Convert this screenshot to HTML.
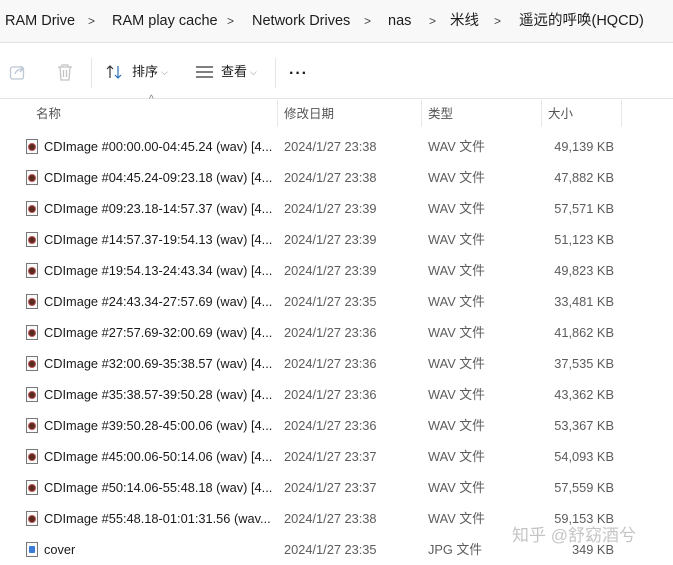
<!DOCTYPE html>
<html><head><meta charset="utf-8"><style>
*{margin:0;padding:0;box-sizing:border-box}
body{width:673px;height:565px;overflow:hidden;background:#fff;font-family:"Liberation Sans","Noto Sans CJK SC",sans-serif;color:#1b1b1b;position:relative}
.crumb{position:absolute;top:0;left:0;width:673px;height:43px;background:#f8f8f8;border-bottom:1px solid #e2e2e2}
.crumb span{position:absolute;top:0;line-height:42px;font-size:14.5px;color:#1c1c1c;white-space:nowrap}
.crumb .c{font-size:12px;color:#444}
.abs{position:absolute;white-space:nowrap}
.hdr{font-size:12.5px;color:#555;top:100px;line-height:28px}
.vl{position:absolute;top:100px;height:27px;width:1px;background:#e6e6e6}
.row{position:absolute;left:0;width:673px;height:31px;font-size:12.8px}
.row span{position:absolute;top:0;line-height:31px;height:31px}
.row .n{left:44px;color:#1a1a1a}
.row .d{left:284px;color:#5c5c5c}
.row .t{left:428px;color:#5c5c5c}
.row .s{right:59px;color:#5c5c5c}
.ic{position:absolute;left:26px;top:8px;width:12px;height:15px;border:1px solid #777;background:#fafafa}
.ic:after{content:"";position:absolute;left:2px;top:4px;width:6px;height:6px;border-radius:50%;background:#5a2a20;box-shadow:0 0 0 1px #b55}
.ic.j:after{border-radius:1px;background:#3a7bd5;box-shadow:none;left:2px;top:3px;width:6px;height:7px}
.tb{position:absolute;top:58px;line-height:28px;font-size:13px;white-space:nowrap}
</style></head><body>
<div class="crumb">
<span style="left:5px">RAM Drive</span><span class="c" style="left:88px">&gt;</span>
<span style="left:112px">RAM play cache</span><span class="c" style="left:227px">&gt;</span>
<span style="left:252px">Network Drives</span><span class="c" style="left:364px">&gt;</span>
<span style="left:388px">nas</span><span class="c" style="left:429px">&gt;</span>
<span style="left:450px">米线</span><span class="c" style="left:494px">&gt;</span>
<span style="left:519px">遥远的呼唤(HQCD)</span>
</div>
<svg class="abs" style="left:9px;top:63px" width="18" height="18" viewBox="0 0 18 18" fill="none" stroke="#bcc8d4" stroke-width="1.3"><rect x="1.5" y="4" width="13" height="12" rx="2"/><path d="M6 11c1-4 4-5 8-5M11 3l3 3-3 3"/></svg>
<svg class="abs" style="left:57px;top:63px" width="16" height="18" viewBox="0 0 16 18" fill="none" stroke="#c4c4c4" stroke-width="1.3"><path d="M1 4h14M5 4V2h6v2M3 4l1 13h8l1-13M6.5 7v7M9.5 7v7"/></svg>
<div class="abs" style="left:91px;top:58px;width:1px;height:30px;background:#e4e4e4"></div>
<svg class="abs" style="left:106px;top:64px" width="18" height="16" viewBox="0 0 18 16" fill="none" stroke="#333" stroke-width="1.2"><path d="M4 14V2M1 5l3-3 3 3"/><path d="M12 2v12M9 11l3 3 3-3" stroke="#2a6fb5"/></svg>
<span class="tb" style="left:132px">排序</span>
<span class="tb" style="left:161px;font-size:9px;color:#888">⌵</span>
<svg class="abs" style="left:196px;top:66px" width="17" height="12" viewBox="0 0 17 12" stroke="#333" stroke-width="1.2"><path d="M0 1h17M0 6h17M0 11h17"/></svg>
<span class="tb" style="left:221px">查看</span>
<span class="tb" style="left:250px;font-size:9px;color:#888">⌵</span>
<div class="abs" style="left:275px;top:58px;width:1px;height:30px;background:#e4e4e4"></div>
<span class="tb" style="left:289px;top:60px;font-size:16px;font-weight:bold;letter-spacing:1px">···</span>
<div class="abs" style="left:0;top:98px;width:673px;height:1px;background:#e4e4e4"></div>
<span class="abs" style="left:149px;top:94px;font-size:10px;color:#777">^</span>
<span class="abs hdr" style="left:36px">名称</span>
<span class="abs hdr" style="left:284px">修改日期</span>
<span class="abs hdr" style="left:428px">类型</span>
<span class="abs hdr" style="left:548px">大小</span>
<div class="vl" style="left:277px"></div><div class="vl" style="left:421px"></div><div class="vl" style="left:541px"></div><div class="vl" style="left:621px"></div>
<div class="row" style="top:131px"><div class="ic"></div><span class="n">CDImage #00:00.00-04:45.24 (wav) [4...</span><span class="d">2024/1/27 23:38</span><span class="t">WAV 文件</span><span class="s">49,139 KB</span></div>
<div class="row" style="top:162px"><div class="ic"></div><span class="n">CDImage #04:45.24-09:23.18 (wav) [4...</span><span class="d">2024/1/27 23:38</span><span class="t">WAV 文件</span><span class="s">47,882 KB</span></div>
<div class="row" style="top:193px"><div class="ic"></div><span class="n">CDImage #09:23.18-14:57.37 (wav) [4...</span><span class="d">2024/1/27 23:39</span><span class="t">WAV 文件</span><span class="s">57,571 KB</span></div>
<div class="row" style="top:224px"><div class="ic"></div><span class="n">CDImage #14:57.37-19:54.13 (wav) [4...</span><span class="d">2024/1/27 23:39</span><span class="t">WAV 文件</span><span class="s">51,123 KB</span></div>
<div class="row" style="top:255px"><div class="ic"></div><span class="n">CDImage #19:54.13-24:43.34 (wav) [4...</span><span class="d">2024/1/27 23:39</span><span class="t">WAV 文件</span><span class="s">49,823 KB</span></div>
<div class="row" style="top:286px"><div class="ic"></div><span class="n">CDImage #24:43.34-27:57.69 (wav) [4...</span><span class="d">2024/1/27 23:35</span><span class="t">WAV 文件</span><span class="s">33,481 KB</span></div>
<div class="row" style="top:317px"><div class="ic"></div><span class="n">CDImage #27:57.69-32:00.69 (wav) [4...</span><span class="d">2024/1/27 23:36</span><span class="t">WAV 文件</span><span class="s">41,862 KB</span></div>
<div class="row" style="top:348px"><div class="ic"></div><span class="n">CDImage #32:00.69-35:38.57 (wav) [4...</span><span class="d">2024/1/27 23:36</span><span class="t">WAV 文件</span><span class="s">37,535 KB</span></div>
<div class="row" style="top:379px"><div class="ic"></div><span class="n">CDImage #35:38.57-39:50.28 (wav) [4...</span><span class="d">2024/1/27 23:36</span><span class="t">WAV 文件</span><span class="s">43,362 KB</span></div>
<div class="row" style="top:410px"><div class="ic"></div><span class="n">CDImage #39:50.28-45:00.06 (wav) [4...</span><span class="d">2024/1/27 23:36</span><span class="t">WAV 文件</span><span class="s">53,367 KB</span></div>
<div class="row" style="top:441px"><div class="ic"></div><span class="n">CDImage #45:00.06-50:14.06 (wav) [4...</span><span class="d">2024/1/27 23:37</span><span class="t">WAV 文件</span><span class="s">54,093 KB</span></div>
<div class="row" style="top:472px"><div class="ic"></div><span class="n">CDImage #50:14.06-55:48.18 (wav) [4...</span><span class="d">2024/1/27 23:37</span><span class="t">WAV 文件</span><span class="s">57,559 KB</span></div>
<div class="row" style="top:503px"><div class="ic"></div><span class="n">CDImage #55:48.18-01:01:31.56 (wav...</span><span class="d">2024/1/27 23:38</span><span class="t">WAV 文件</span><span class="s">59,153 KB</span></div>
<div class="row" style="top:534px"><div class="ic j"></div><span class="n">cover</span><span class="d">2024/1/27 23:35</span><span class="t">JPG 文件</span><span class="s">349 KB</span></div>
<span class="abs" style="left:512px;top:524px;line-height:24px;font-size:17px;color:rgba(150,150,150,0.55)">知乎 @舒窈酒兮</span>
</body></html>
